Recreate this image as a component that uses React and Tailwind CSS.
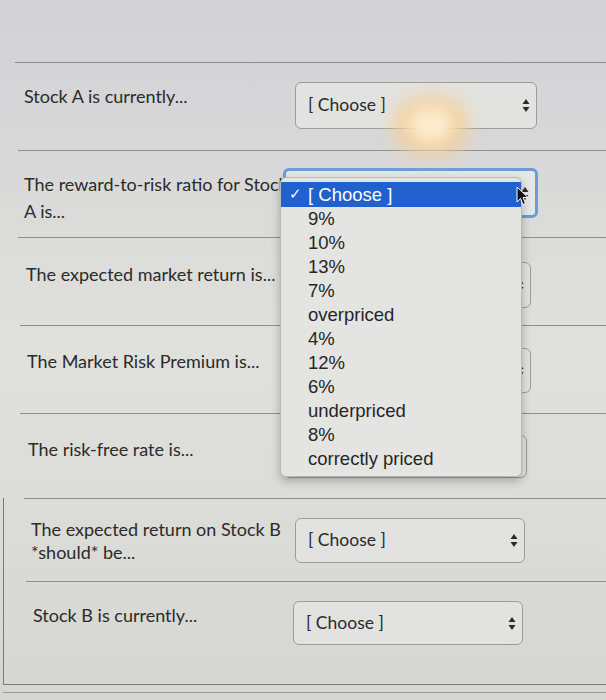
import React from "react";

const rows = [
  { label: "Stock A is currently...", h: 88, lx: 24, lt: 22, lead: 22, sx: 295, st: 19, sw: 242, sh: 47, ml: 15 },
  { label: "The reward-to-risk ratio for Stock A is...", h: 87, lx: 24, lt: 20, lead: 27, sx: 283, st: 17, sw: 255, sh: 50, focus: true, lw: 278, ml: 18, hidden: true },
  { label: "The expected market return is...", h: 88, lx: 26, lt: 25, lead: 22, sx: 286, st: 24, sw: 245, sh: 46, ml: 18, hidden: true },
  { label: "The Market Risk Premium is...", h: 88, lx: 27, lt: 24, lead: 22, sx: 286, st: 22, sw: 245, sh: 45, ml: 20, hidden: true },
  { label: "The risk-free rate is...", h: 85, lx: 28, lt: 24, lead: 22, sx: 284, st: 21, sw: 243, sh: 43, ml: 20, hidden: true },
];

const boxRows = [
  { label: "The expected return on Stock B *should* be...", h: 83, lx: 31, lt: 19, lead: 23, sx: 295, st: 19, sw: 230, sh: 45, lw: 260, ml: 20 },
  { label: "Stock B is currently...", h: 103, lx: 33, lt: 22, lead: 22, sx: 293, st: 19, sw: 230, sh: 44, ml: 22 },
];

const options = ["9%", "10%", "13%", "7%", "overpriced", "4%", "12%", "6%", "underpriced", "8%", "correctly priced"];

const Arrows = () => (
  <svg width="8" height="15" viewBox="0 0 8 15">
    <path d="M4 1 L7.5 6 H0.5 Z" fill="#2a2a2a" />
    <path d="M4 14 L7.5 9 H0.5 Z" fill="#2a2a2a" />
  </svg>
);

const Select = ({ r, left }) => (
  <div
    className={
      "flex items-center justify-between rounded-[6px] pl-[12px] pr-[6px] " +
      (r.focus
        ? "border-[3px] border-[#6f9ad6] bg-[#e6e6e4]"
        : "border border-[#9c9c9a] bg-[#e2e2e0]")
    }
    style={{ marginLeft: left, marginTop: r.st, width: r.sw, height: r.sh }}
  >
    <span className="text-[17.5px] text-[#2a2a2a]">{r.hidden ? "" : "[ Choose ]"}</span>
    <Arrows />
  </div>
);

const Row = ({ r, base }) => {
  const offset = base + r.ml;
  return (
    <div className="relative border-t border-[#8e8e8c]" style={{ height: r.h, marginLeft: r.ml }}>
      <div
        className="absolute text-[18px]"
        style={{ left: r.lx - offset, top: r.lt, lineHeight: r.lead + "px", width: r.lw }}
      >
        {r.label}
      </div>
      <div className="flex">
        <Select r={r} left={r.sx - offset} />
      </div>
    </div>
  );
};

export default function App() {
  return (
    <div
      className="relative w-[606px] h-[700px] overflow-hidden bg-gradient-to-b from-[#d2d2d6] via-[#e0e0dc] to-[#d6d6d2] text-[#2b2b2b]"
      style={{ fontFamily: "Lato, 'Open Sans', sans-serif" }}
    >
      <div className="h-[62px]" />
      {rows.map((r, i) => (
        <Row key={i} r={r} base={0} />
      ))}
      <div className="ml-[3px] border-l border-b border-[#7a7a78]">
        {boxRows.map((r, i) => (
          <Row key={i} r={r} base={4} />
        ))}
      </div>
      <div className="mt-[7px] ml-[3px] border-t border-[#9a9a98]" />

      {/* glare */}
      <div className="absolute left-[393px] top-[96px] w-[76px] h-[60px] rounded-full bg-[#f7d094] blur-[9px] opacity-80" />
      <div className="absolute left-[410px] top-[108px] w-[42px] h-[34px] rounded-full bg-[#fcebcd] blur-[7px]" />

      {/* open dropdown menu */}
      <div
        className="absolute left-[280px] top-[177px] w-[242px] h-[300px] rounded-[6px] bg-[#e4e4e2] border border-[#b8b8b6] shadow-[0_4px_10px_rgba(0,0,0,0.25)] pt-[4px]"
        style={{ fontFamily: "'Liberation Sans', Arial, sans-serif" }}
      >
        <div className="flex items-center h-[25px] bg-[#2160cf] text-white text-[18.5px]">
          <span className="w-[27px] pl-[8px] text-[15px]">✓</span>
          <span>[ Choose ]</span>
        </div>
        {options.map((o) => (
          <div key={o} className="h-[24px] flex items-center pl-[27px] text-[18.5px] text-[#262626]">
            {o}
          </div>
        ))}
      </div>

      {/* cursor */}
      <svg className="absolute left-[516px] top-[186px]" width="14" height="20" viewBox="0 0 14 20">
        <path d="M1 1 L1 16 L4.5 12.5 L7 18.5 L9.5 17.5 L7 11.5 L12 11.5 Z" fill="#111" stroke="#fff" strokeWidth="1" />
      </svg>
    </div>
  );
}
